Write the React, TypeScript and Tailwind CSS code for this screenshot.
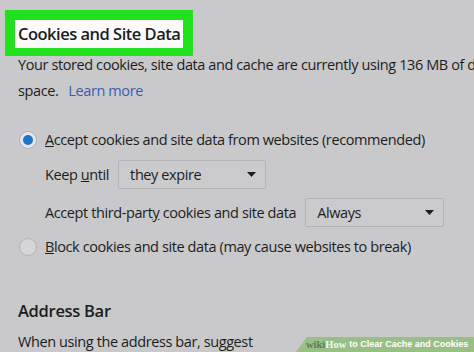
import type { ReactNode } from 'react'

function Radio({ checked }: { checked?: boolean }) {
  return checked ? (
    <span className="flex h-[18px] w-[18px] shrink-0 items-center justify-center rounded-full border border-[#a9b4c0] bg-[#e4e6ea]">
      <span className="h-[10px] w-[10px] rounded-full bg-[#1f74c4]" />
    </span>
  ) : (
    <span className="h-[18px] w-[18px] shrink-0 rounded-full border border-[#b4b4b6] bg-[#d6d6d8]" />
  )
}

function Select({ value, width }: { value: string; width: string }) {
  return (
    <div
      className={`flex h-[29px] ${width} items-center justify-between rounded-[2px] border border-[#b3b3b5] bg-[#cbcbcd] pl-[11px] pr-[9px]`}
    >
      <span>{value}</span>
      <svg width="9" height="5" viewBox="0 0 9 5">
        <path d="M0 0h9L4.5 5z" fill="#1d1d1d" />
      </svg>
    </div>
  )
}

function Row({ children, className = '' }: { children: ReactNode; className?: string }) {
  return <div className={`flex items-center whitespace-nowrap ${className}`}>{children}</div>
}

export default function App() {
  return (
    <div className="relative h-[352px] w-[474px] overflow-hidden bg-[#c9c9cb] font-['Open_Sans',sans-serif] text-[14.5px] tracking-[-0.4px] text-[#1d1d1d]">
      <div className="pl-[5px] pt-[10px]">
        <div className="inline-block bg-[#21e11e] px-[10px] pb-[8px] pt-[10px]">
          <div className="bg-[#fbfbfb] px-[3px] text-[16.5px] font-semibold leading-[28px] tracking-[-0.5px]">
            Cookies and Site Data
          </div>
        </div>
      </div>

      <div className="-mt-[4px] whitespace-nowrap pl-[18px] leading-[26px]">
        <p>Your stored cookies, site data and cache are currently using 136 MB of disk</p>
        <p>
          space.<span className="ml-[10px] text-[#3a5db3]">Learn more</span>
        </p>
      </div>

      <div className="mt-[24px] flex flex-col">
        <Row className="h-[24px] gap-[8px] pl-[19px]">
          <Radio checked />
          <span>
            <u>A</u>ccept cookies and site data from websites (recommended)
          </span>
        </Row>
        <Row className="mt-[8px] gap-[9px] pl-[45px]">
          <span>
            Keep <u>u</u>ntil
          </span>
          <Select value="they expire" width="w-[148px]" />
        </Row>
        <Row className="mt-[9px] gap-[9px] pl-[45px]">
          <span>
            Accept third-part<u>y</u> cookies and site data
          </span>
          <Select value="Always" width="w-[139px]" />
        </Row>
        <Row className="mt-[8px] h-[24px] gap-[8px] pl-[19px]">
          <Radio />
          <span>
            <u>B</u>lock cookies and site data (may cause websites to break)
          </span>
        </Row>
      </div>

      <h2 className="mt-[38px] pl-[18px] text-[16.5px] font-semibold leading-[28px] tracking-[-0.3px]">Address Bar</h2>
      <p className="mt-[4px] whitespace-nowrap pl-[18px] leading-[26px]">When using the address bar, suggest</p>

      <div className="absolute bottom-0 right-0 flex h-[15px] w-[178px] items-center bg-[#92bf7c]/90 pl-[10px] text-[9px] font-bold tracking-normal text-white [clip-path:polygon(11px_0,100%_0,100%_100%,0_100%)]">
        <span className="font-['Liberation_Serif',serif] text-[10.5px] text-[#5f7a52]">wiki</span>
        <span className="font-['Liberation_Serif',serif] text-[10.5px] text-[#f2f7ee]">How</span>
        <span className="ml-[3px] font-['Liberation_Sans',sans-serif]">to Clear Cache and Cookies</span>
      </div>
    </div>
  )
}
